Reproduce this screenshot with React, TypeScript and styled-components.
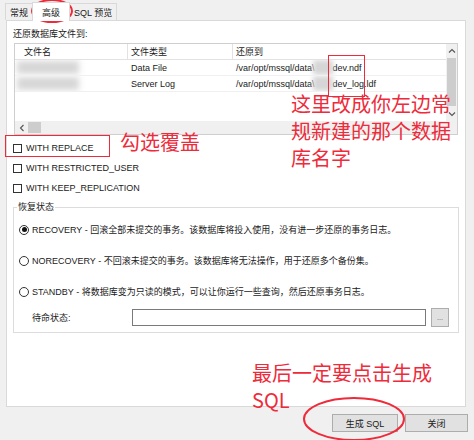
import React from "react";
import styled, { createGlobalStyle } from "styled-components";

const RED = "#ee2b3b";

const GlobalStyle = createGlobalStyle`
  body {
    margin: 0;
    background: #f0f0f0;
    font-family: "Liberation Sans", "Noto Sans CJK SC", sans-serif;
    font-size: 9px;
    color: #1a1a1a;
  }
  * { box-sizing: border-box; }
`;

const Window = styled.div`
  position: relative;
  width: 474px;
  height: 440px;
  overflow: hidden;
  background: #f0f0f0;
  display: flex;
  flex-direction: column;
`;

const TabStrip = styled.div`
  height: 20px;
  display: flex;
  align-items: flex-end;
  padding-left: 5px;
`;

const Tab = styled.div<{ $active?: boolean }>`
  position: relative;
  z-index: ${(p) => (p.$active ? 1 : 0)};
  height: ${(p) => (p.$active ? 19 : 17)}px;
  margin-bottom: ${(p) => (p.$active ? -1 : 0)}px;
  padding: 0 ${(p) => (p.$active ? 9 : 4)}px;
  display: flex;
  align-items: center;
  background: ${(p) => (p.$active ? "#fff" : "#f0f0f0")};
  border: 1px solid #d9d9d9;
  border-bottom: none;
  margin-right: -1px;
  white-space: nowrap;
`;

const Panel = styled.div`
  margin: 0 8px 0 6px;
  height: 387px;
  background: #fff;
  border: 1px solid #d9d9d9;
  padding: 7px 6px 0;
  display: flex;
  flex-direction: column;
`;

const Caption = styled.div`
  height: 12px;
  line-height: 12px;
`;

const FileTable = styled.div`
  margin: 3px 1px 0;
  height: 92px;
  border: 1px solid #cfcfcf;
  display: flex;
`;

const TableBody = styled.div`
  flex: 1;
  display: flex;
  flex-direction: column;
`;

const Row = styled.div<{ $head?: boolean }>`
  height: 16px;
  display: grid;
  grid-template-columns: 113px 105px 1fr;
  border-bottom: 1px solid ${(p) => (p.$head ? "#e2e2e2" : "#f0f0f0")};
`;

const Cell = styled.div<{ $head?: boolean; $pad?: number }>`
  display: flex;
  align-items: center;
  padding-left: ${(p) => p.$pad ?? 3}px;
  border-right: 1px solid ${(p) => (p.$head ? "#e2e2e2" : "transparent")};
  white-space: nowrap;
  overflow: hidden;
`;

const NameBlur = styled.span`
  display: inline-block;
  width: 62px;
  height: 13px;
  background: #d6d6d6;
  filter: blur(3px);
`;

const PathBlur = styled.span`
  display: inline-block;
  width: 20px;
  height: 15px;
  margin-left: -2px;
  background: #d6d6d6;
  filter: blur(2.5px);
`;

const Filler = styled.div`
  flex: 1;
`;

const HScroll = styled.div`
  height: 13px;
  background: #f0f0f0;
  display: flex;
  align-items: center;
  padding-left: 4px;
  gap: 3px;
`;

const HThumb = styled.div`
  width: 13px;
  height: 11px;
  background: #cdcdcd;
`;

const VScroll = styled.div`
  width: 11px;
  background: #f0f0f0;
  display: flex;
  flex-direction: column;
  align-items: center;
`;

const ArrowCell = styled.div`
  height: 14px;
  display: flex;
  align-items: center;
  justify-content: center;
`;

const VThumb = styled.div`
  width: 9px;
  height: 48px;
  background: #cdcdcd;
`;

const Corner = styled.div`
  width: 11px;
  height: 13px;
  background: #f0f0f0;
`;

const Options = styled.div`
  margin-top: 3px;
  display: flex;
  flex-direction: column;
`;

const OptionRow = styled.label`
  height: 20px;
  display: flex;
  align-items: center;
  gap: 4px;
`;

const Box = styled.span`
  width: 9px;
  height: 9px;
  border: 1px solid #333;
  background: #fff;
`;

const Group = styled.fieldset`
  margin: 3px 0 0;
  padding: 1px 9px 5px 5px;
  border: 1px solid #dcdcdc;
  min-width: 0;
`;

const Legend = styled.legend`
  padding: 0 1px;
  margin-left: -2px;
  line-height: 12px;
`;

const RadioRow = styled.label`
  height: 31px;
  display: flex;
  align-items: center;
  gap: 3px;
  white-space: nowrap;
`;

const Radio = styled.span<{ $on?: boolean }>`
  width: 10px;
  height: 10px;
  border: 1px solid #333;
  border-radius: 50%;
  display: flex;
  align-items: center;
  justify-content: center;
  &::after {
    content: "";
    width: 5px;
    height: 5px;
    border-radius: 50%;
    background: ${(p) => (p.$on ? "#111" : "transparent")};
  }
`;

const StandbyRow = styled.div`
  height: 20px;
  display: flex;
  align-items: center;
  padding-left: 13px;
`;

const StandbyLabel = styled.span`
  width: 100px;
`;

const PathInput = styled.div`
  flex: 1;
  height: 17px;
  border: 1px solid #7a7a7a;
  background: #fff;
`;

const Browse = styled.div`
  width: 18px;
  height: 19px;
  margin-left: 5px;
  background: #e1e1e1;
  border: 1px solid #adadad;
  display: flex;
  align-items: center;
  justify-content: center;
  font-size: 7px;
  color: #555;
`;

const Footer = styled.div`
  flex: 1;
  display: flex;
  justify-content: flex-end;
  align-items: flex-start;
  gap: 7px;
  padding: 7px 6px 0 0;
`;

const Button = styled.div<{ $w: number }>`
  width: ${(p) => p.$w}px;
  height: 18px;
  background: #e1e1e1;
  border: 1px solid #adadad;
  display: flex;
  align-items: center;
  justify-content: center;
`;

/* red annotations drawn over the dialog */
const Note = styled.div`
  position: absolute;
  color: ${RED};
  font-family: "Noto Sans CJK SC", sans-serif;
  font-size: 20px;
  line-height: 27px;
  white-space: nowrap;
`;

const PathNote = styled(Note)`
  left: 291px;
  top: 90px;
`;

const ReplaceNote = styled(Note)`
  left: 120px;
  top: 128px;
`;

const SqlNote = styled(Note)`
  left: 252px;
  top: 359px;
`;

const Mark = styled.div`
  position: absolute;
  border: 1.5px solid ${RED};
`;

const PathMark = styled(Mark)`
  left: 328px;
  top: 55px;
  width: 37px;
  height: 42px;
`;

const ReplaceMark = styled(Mark)`
  left: 5px;
  top: 135px;
  width: 105px;
  height: 22px;
`;

const Ring = styled.svg`
  position: absolute;
  overflow: visible;
`;

const TabRing = styled(Ring)`
  left: 31px;
  top: -1px;
`;

const SqlRing = styled(Ring)`
  left: 302px;
  top: 397px;
`;

const Chevron = ({ dir }: { dir: "up" | "down" | "left" }) => {
  const pts = {
    up: "1,4.5 4,1.5 7,4.5",
    down: "1,1.5 4,4.5 7,1.5",
    left: "4.5,1 1.5,4 4.5,7",
  }[dir];
  const size = dir === "left" ? { w: 6, h: 8 } : { w: 8, h: 6 };
  return (
    <svg width={size.w} height={size.h} viewBox={`0 0 ${size.w} ${size.h}`}>
      <polyline points={pts} fill="none" stroke="#555" strokeWidth="1.1" />
    </svg>
  );
};

const files = [
  { type: "Data File", tail: "dev.ndf" },
  { type: "Server Log", tail: "dev_log.ldf" },
];

const radios = [
  { on: true, text: "RECOVERY - 回滚全部未提交的事务。该数据库将投入使用，没有进一步还原的事务日志。" },
  { on: false, text: "NORECOVERY - 不回滚未提交的事务。该数据库将无法操作，用于还原多个备份集。" },
  { on: false, text: "STANDBY - 将数据库变为只读的模式，可以让你运行一些查询，然后还原事务日志。" },
];

const App: React.FC = () => {
  return (
    <Window>
      <GlobalStyle />
      <TabStrip>
        <Tab>常规</Tab>
        <Tab $active>高级</Tab>
        <Tab>SQL 预览</Tab>
      </TabStrip>

      <Panel>
        <Caption>还原数据库文件到:</Caption>
        <FileTable>
          <TableBody>
            <Row $head>
              <Cell $head $pad={9}>文件名</Cell>
              <Cell $head>文件类型</Cell>
              <Cell>还原到</Cell>
            </Row>
            {files.map((f) => (
              <Row key={f.type}>
                <Cell $pad={2}>
                  <NameBlur />
                </Cell>
                <Cell>{f.type}</Cell>
                <Cell>
                  /var/opt/mssql/data\
                  <PathBlur />
                  {f.tail}
                </Cell>
              </Row>
            ))}
            <Filler />
            <HScroll>
              <Chevron dir="left" />
              <HThumb />
            </HScroll>
          </TableBody>
          <VScroll>
            <ArrowCell>
              <Chevron dir="up" />
            </ArrowCell>
            <VThumb />
            <Filler />
            <ArrowCell>
              <Chevron dir="down" />
            </ArrowCell>
            <Corner />
          </VScroll>
        </FileTable>

        <Options>
          <OptionRow>
            <Box />
            WITH REPLACE
          </OptionRow>
          <OptionRow>
            <Box />
            WITH RESTRICTED_USER
          </OptionRow>
          <OptionRow>
            <Box />
            WITH KEEP_REPLICATION
          </OptionRow>
        </Options>

        <Group>
          <Legend>恢复状态</Legend>
          {radios.map((r) => (
            <RadioRow key={r.text}>
              <Radio $on={r.on} />
              {r.text}
            </RadioRow>
          ))}
          <StandbyRow>
            <StandbyLabel>待命状态:</StandbyLabel>
            <PathInput />
            <Browse>...</Browse>
          </StandbyRow>
        </Group>
      </Panel>

      <Footer>
        <Button $w={66}>生成 SQL</Button>
        <Button $w={63}>关闭</Button>
      </Footer>

      <TabRing width="42" height="24">
        <ellipse cx="21" cy="12" rx="20" ry="11" fill="none" stroke={RED} strokeWidth="2" />
      </TabRing>
      <PathMark />
      <PathNote>
        这里改成你左边常
        <br />
        规新建的那个数据
        <br />
        库名字
      </PathNote>
      <ReplaceMark />
      <ReplaceNote>勾选覆盖</ReplaceNote>
      <SqlNote>
        最后一定要点击生成
        <br />
        SQL
      </SqlNote>
      <SqlRing width="104" height="46">
        <ellipse cx="52" cy="22" rx="50" ry="21" fill="none" stroke={RED} strokeWidth="2" />
      </SqlRing>
    </Window>
  );
};

export default App;
